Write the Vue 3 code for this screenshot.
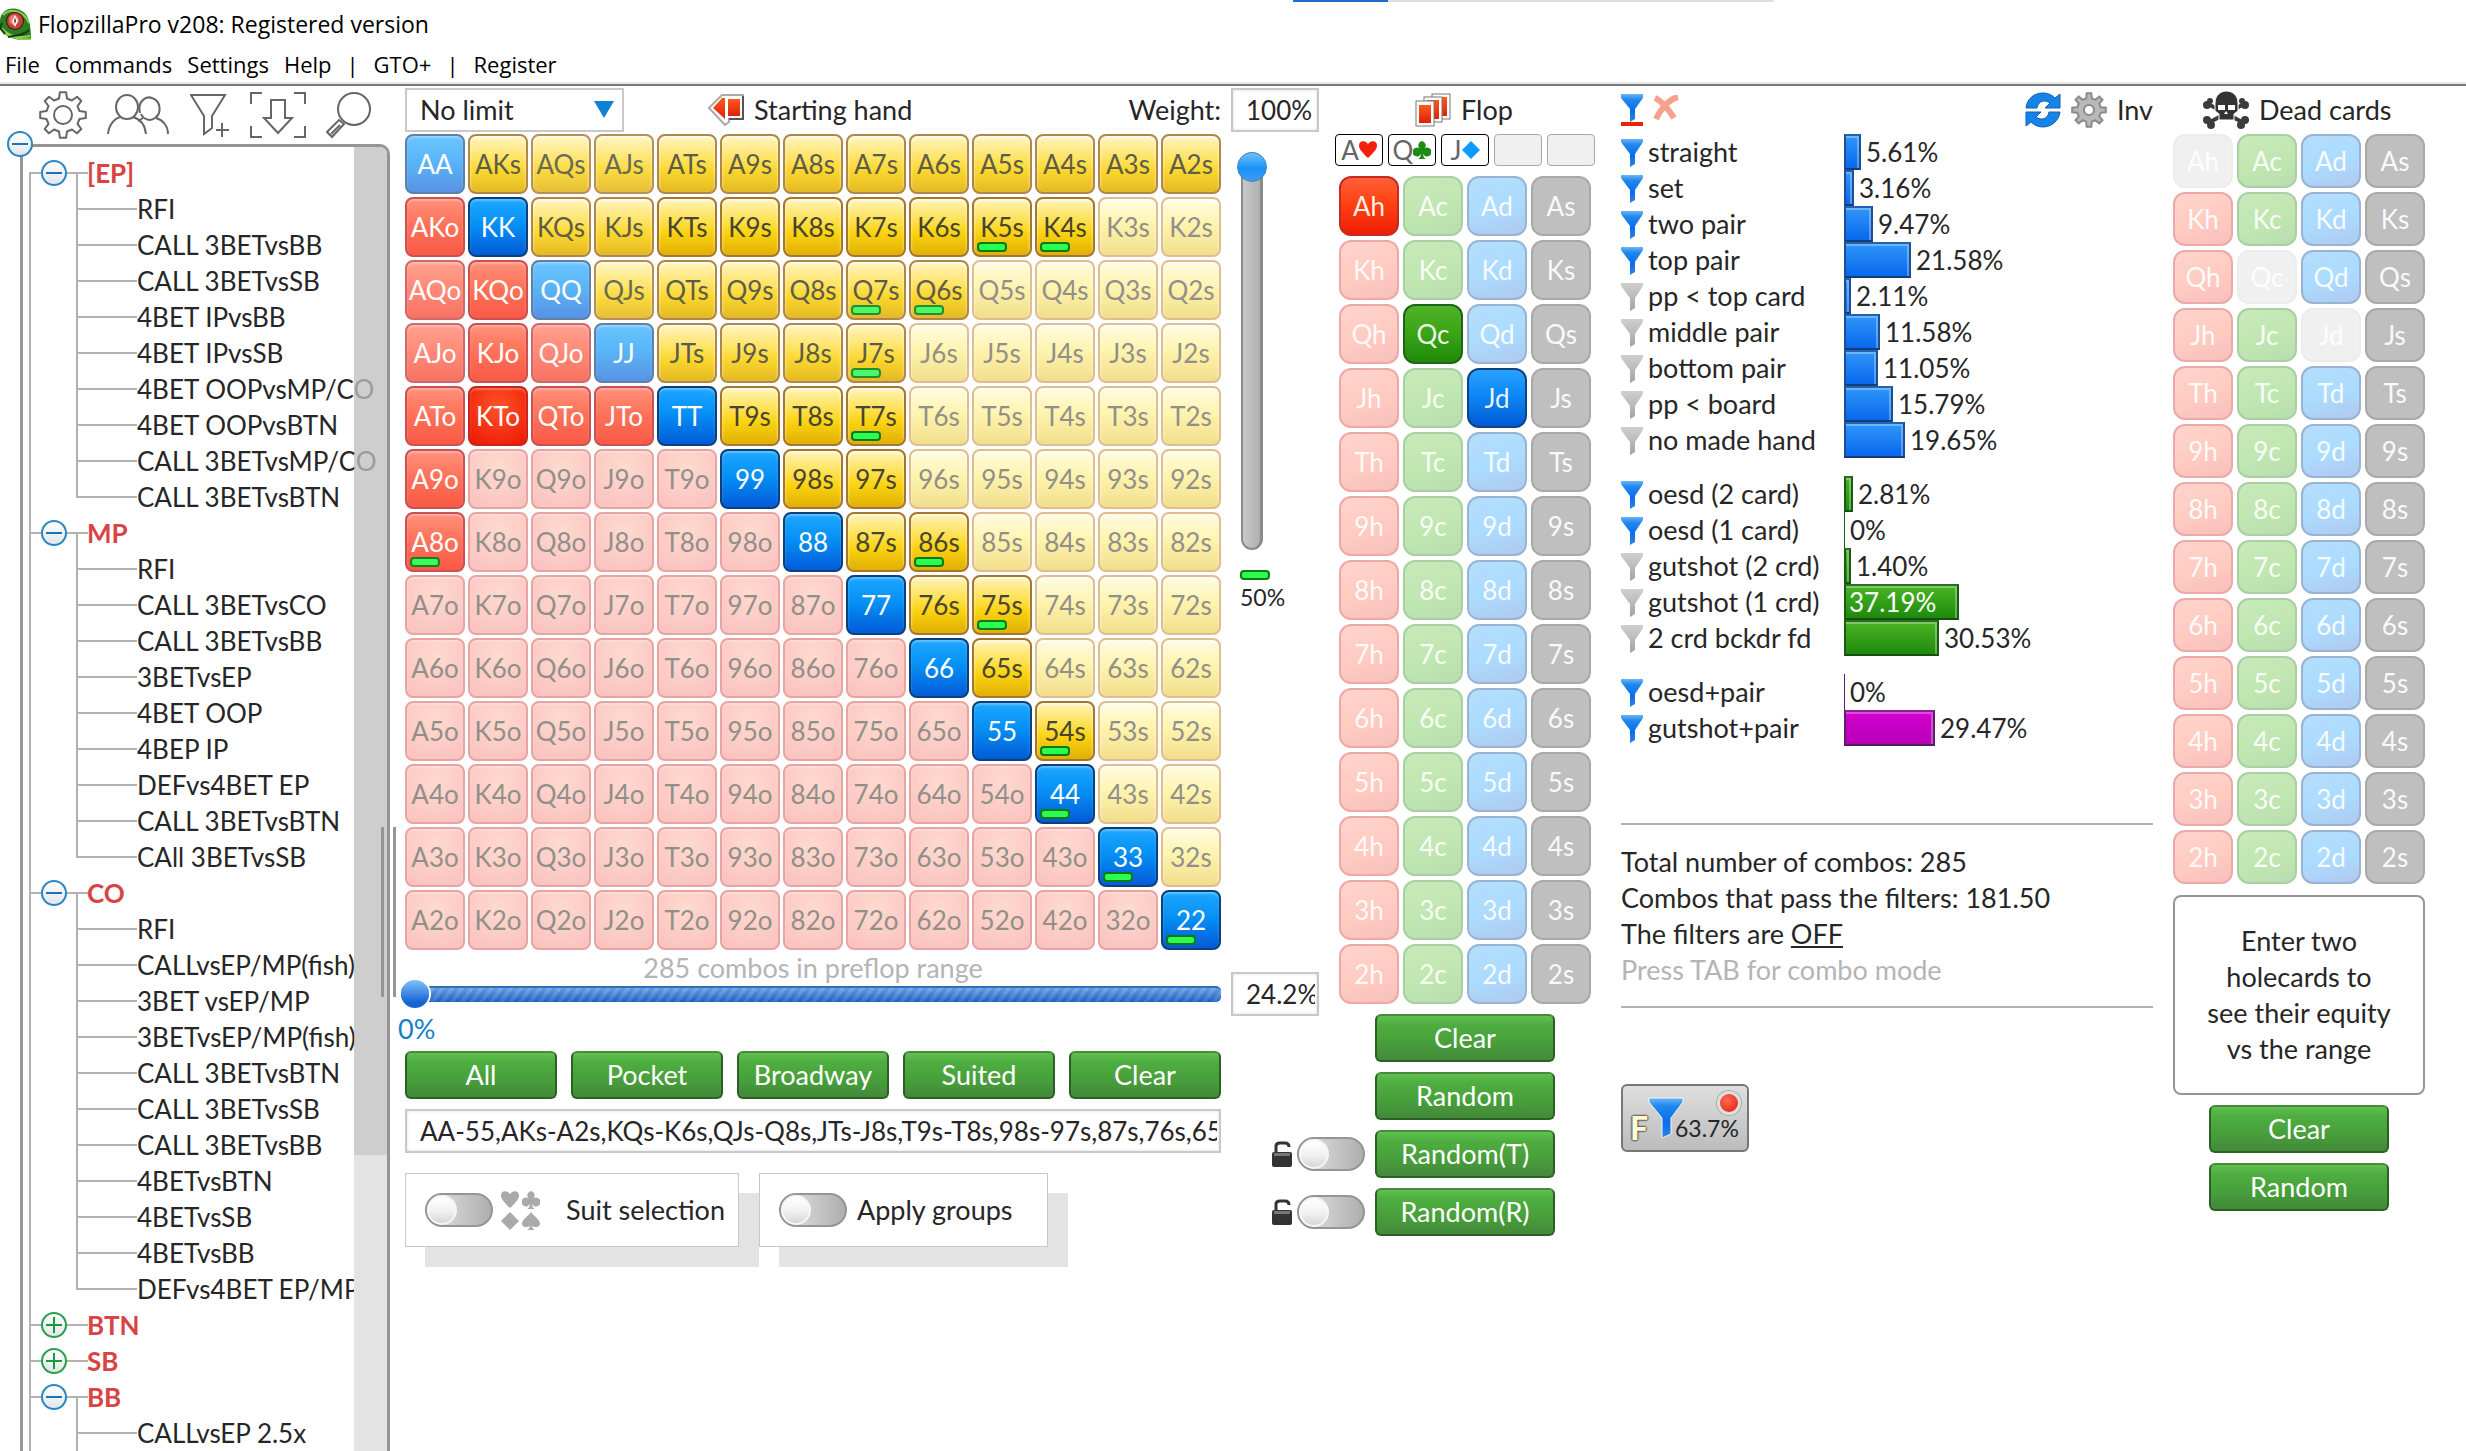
<script setup>
import { ref } from 'vue'

const ranks = 'AKQJT98765432'.split('')
const suits = ['h', 'c', 'd', 's']

const menuItems = ['File', 'Commands', 'Settings', 'Help', '|', 'GTO+', '|', 'Register']

const treeGroups = [
  {
    name: '[EP]',
    open: true,
    items: [
      'RFI',
      'CALL 3BETvsBB',
      'CALL 3BETvsSB',
      '4BET IPvsBB',
      '4BET IPvsSB',
      '4BET OOPvsMP/CO',
      '4BET OOPvsBTN',
      'CALL 3BETvsMP/CO',
      'CALL 3BETvsBTN'
    ]
  },
  {
    name: 'MP',
    open: true,
    items: [
      'RFI',
      'CALL 3BETvsCO',
      'CALL 3BETvsBB',
      '3BETvsEP',
      '4BET OOP',
      '4BEP IP',
      'DEFvs4BET EP',
      'CALL 3BETvsBTN',
      'CAll 3BETvsSB'
    ]
  },
  {
    name: 'CO',
    open: true,
    items: [
      'RFI',
      'CALLvsEP/MP(fish)',
      '3BET vsEP/MP',
      '3BETvsEP/MP(fish)',
      'CALL 3BETvsBTN',
      'CALL 3BETvsSB',
      'CALL 3BETvsBB',
      '4BETvsBTN',
      '4BETvsSB',
      '4BETvsBB',
      'DEFvs4BET EP/MP'
    ]
  },
  { name: 'BTN', open: false, items: [] },
  { name: 'SB', open: false, items: [] },
  { name: 'BB', open: true, more: true, items: ['CALLvsEP 2.5x'] }
]

// lowest suited kicker that is in the range, per high card
const suitedFloor = { A: '2', K: '4', Q: '6', J: '7', T: '7', 9: '7', 8: '6', 7: '5', 6: '5', 5: '4' }
const offsuit = ['AKo', 'AQo', 'KQo', 'AJo', 'KJo', 'QJo', 'ATo', 'KTo', 'QTo', 'JTo', 'A9o', 'A8o']
const halfWeight = ['K5s', 'K4s', 'Q7s', 'Q6s', 'J7s', 'T7s', 'A8o', '86s', '75s', '54s', '44', '33', '22']
const board = ['Ah', 'Qc', 'Jd']

function buildCell(row, col) {
  const high = ranks[Math.min(row, col)]
  const low = ranks[Math.max(row, col)]
  const type = row === col ? 'pair' : col > row ? 'suited' : 'off'
  const name = high + low + { pair: '', suited: 's', off: 'o' }[type]
  let active = type === 'pair'
  if (type === 'suited') {
    active = high in suitedFloor && ranks.indexOf(low) <= ranks.indexOf(suitedFloor[high])
  } else if (type === 'off') {
    active = offsuit.includes(name)
  }
  const blockers = board.filter((card) => card[0] === high).length + board.filter((card) => card[0] === low).length
  return { name, type, active, blockers: active ? blockers : 0, half: halfWeight.includes(name) }
}

const cells = ranks.flatMap((_, row) => ranks.map((_, col) => buildCell(row, col)))
const deck = ranks.flatMap((rank) => suits.map((suit) => ({ name: rank + suit, suit })))

const slots = [
  { rank: 'A', suit: 'h' },
  { rank: 'Q', suit: 'c' },
  { rank: 'J', suit: 'd' },
  {},
  {}
]

const suitPaths = {
  h: 'M10 19 C3 12 0 9 0 5 C0 -1 8 -1 10 4 C12 -1 20 -1 20 5 C20 9 17 12 10 19 Z',
  c: 'M10 0 A5 5 0 0 1 13 8 A5 5 0 1 1 11 14 L12 18 L14 20 H6 L8 18 L9 14 A5 5 0 1 1 7 8 A5 5 0 0 1 10 0 Z',
  d: 'M10 0 L20 10 L10 20 L0 10 Z',
  s: 'M10 0 C12 4 20 8 20 13 C20 17 14 18 11 15 L12 18 L14 20 H6 L8 18 L9 15 C6 18 0 17 0 13 C0 8 8 4 10 0 Z'
}

const statGroups = [
  {
    color: 'blue',
    rows: [
      { label: 'straight', value: 5.61, text: '5.61%', on: true },
      { label: 'set', value: 3.16, text: '3.16%', on: true },
      { label: 'two pair', value: 9.47, text: '9.47%', on: true },
      { label: 'top pair', value: 21.58, text: '21.58%', on: true },
      { label: 'pp < top card', value: 2.11, text: '2.11%' },
      { label: 'middle pair', value: 11.58, text: '11.58%' },
      { label: 'bottom pair', value: 11.05, text: '11.05%' },
      { label: 'pp < board', value: 15.79, text: '15.79%' },
      { label: 'no made hand', value: 19.65, text: '19.65%' }
    ]
  },
  {
    color: 'green',
    rows: [
      { label: 'oesd (2 card)', value: 2.81, text: '2.81%', on: true },
      { label: 'oesd (1 card)', value: 0, text: '0%', on: true },
      { label: 'gutshot (2 crd)', value: 1.4, text: '1.40%' },
      { label: 'gutshot (1 crd)', value: 37.19, text: '37.19%', inside: true },
      { label: '2 crd bckdr fd', value: 30.53, text: '30.53%' }
    ]
  },
  {
    color: 'purple',
    rows: [
      { label: 'oesd+pair', value: 0, text: '0%', on: true },
      { label: 'gutshot+pair', value: 29.47, text: '29.47%', on: true }
    ]
  }
]

const gameType = ref('No limit')
const weight = ref(100)
const percentage = ref(0)
const weightText = ref('100%')
const rangePercent = ref('24.2%')
const rangeText = ref('AA-55,AKs-A2s,KQs-K6s,QJs-Q8s,JTs-J8s,T9s-T8s,98s-97s,87s,76s,65s,AKo-A9o,KQo-KTo')

const barWidth = (value) => Math.max(1, Math.round(value * 3.1)) + 'px'

function gearPath(center, outer, inner, teeth) {
  const points = []
  const step = (Math.PI * 2) / teeth
  for (let i = 0; i < teeth; i++) {
    const angle = i * step - Math.PI / 2
    const corners = [
      [inner, -0.3],
      [outer, -0.17],
      [outer, 0.17],
      [inner, 0.3]
    ]
    corners.forEach(([radius, offset]) => {
      const a = angle + offset * step
      points.push(`${(center + radius * Math.cos(a)).toFixed(1)} ${(center + radius * Math.sin(a)).toFixed(1)}`)
    })
  }
  return `M${points.join(' L')} Z`
}
</script>

<template>
  <div class="app">
    <svg class="defs" width="0" height="0" aria-hidden="true">
      <defs>
        <linearGradient id="funnel-blue" x1="0" y1="0" x2="0" y2="1">
          <stop offset="0" stop-color="#6db4f5" />
          <stop offset="0.2" stop-color="#2287ee" />
          <stop offset="0.6" stop-color="#0a6cf0" />
          <stop offset="1" stop-color="#2f86dd" />
        </linearGradient>
        <linearGradient id="funnel-gray" x1="0" y1="0" x2="0" y2="1">
          <stop offset="0" stop-color="#d0d0d0" />
          <stop offset="1" stop-color="#a2a2a2" />
        </linearGradient>
        <linearGradient id="card-red" x1="0" y1="0" x2="0" y2="1">
          <stop offset="0" stop-color="#ff5a1c" />
          <stop offset="1" stop-color="#e02008" />
        </linearGradient>
      </defs>
    </svg>

    <div class="load-bar"><span class="done"></span><span class="left"></span></div>
    <header class="titlebar">
      <svg class="logo" viewBox="0 0 32 32" aria-hidden="true">
        <path d="M0 12 C1 2 11 -2 20 2 C28 5 31 14 31 31 C24 33 14 32 7 28 C2 24 -1 19 0 12 Z" fill="#2c7d22" />
        <path d="M2 20 C8 29 20 30 30 28 M3 7 C11 -1 24 3 29 15 M5 25 C13 31 24 32 31 31" fill="none" stroke="#8fce52" stroke-width="2" />
        <path d="M8 29 C16 27 24 28 29 22 M2 15 L0 20 L5 26" fill="none" stroke="#12400f" stroke-width="2" />
        <circle cx="15" cy="13" r="9" fill="#301512" />
        <circle cx="15" cy="13" r="8" fill="#c3433a" />
        <circle cx="14" cy="12" r="5" fill="#e07a6c" />
        <path d="M15 7 L18 13 L15 19 L12 13 Z" fill="#fff" />
        <path d="M15 9 L16 13 L15 16 L14 13 Z" fill="#a21610" />
      </svg>
      <span>FlopzillaPro v208: Registered version</span>
    </header>
    <nav class="menubar">
      <template v-for="(item, index) in menuItems" :key="index">
        <span v-if="item === '|'">|</span>
        <a v-else href="#">{{ item }}</a>
      </template>
    </nav>

    <main class="workspace">
      <aside class="sidebar" aria-label="Ranges">
        <div class="tools">
          <button type="button" aria-label="Settings">
            <svg width="48" height="48" viewBox="0 0 48 48" fill="none" stroke="#666" stroke-width="2" stroke-linejoin="round">
              <path :d="gearPath(24, 23, 17, 8)" />
              <circle cx="24" cy="24" r="9" />
            </svg>
          </button>
          <button type="button" aria-label="Players">
            <svg width="62" height="48" viewBox="0 0 62 48" fill="none" stroke="#666" stroke-width="2">
              <ellipse cx="20" cy="16" rx="11" ry="12" />
              <path d="M1 43 C2 33 8 27 14 26 M26 26 C33 28 38 34 39 43" />
              <path d="M33 22 C30 9 40 5 45 7 C54 10 55 22 48 27 C43 31 36 28 34 23" />
              <path d="M49 27 C56 29 61 35 61 43 M31 30 L36 27" />
            </svg>
          </button>
          <button type="button" aria-label="Add filter">
            <svg width="40" height="48" viewBox="0 0 40 48" fill="none" stroke="#666" stroke-width="2">
              <path d="M1 4 H35 L22 25 V37 L14 43 V25 Z" />
              <path d="M26 39 H39 M32 32 V46" />
            </svg>
          </button>
          <button type="button" aria-label="Save range">
            <svg width="56" height="48" viewBox="0 0 56 48" fill="none" stroke="#666" stroke-width="2">
              <path d="M12 2 H1 V13 M44 2 H55 V13 M1 35 V46 H12 M55 35 V46 H44" />
              <path d="M21 9 H35 V27 H42 L28 42 L14 27 H21 Z" />
            </svg>
          </button>
          <button type="button" aria-label="Search">
            <svg width="46" height="48" viewBox="0 0 46 48" fill="none" stroke="#666" stroke-width="2">
              <circle cx="28" cy="18" r="16" />
              <path d="M13 29 L18 33 L6 46 L1 41 Z M14 34 L5 43" />
            </svg>
          </button>
        </div>

        <div class="tree">
          <button class="node-toggle root-toggle minus" type="button" aria-label="Collapse all"></button>
          <ul class="groups">
            <li v-for="group in treeGroups" :key="group.name">
              <div class="group-row">
                <button
                  class="node-toggle"
                  :class="group.open ? 'minus' : 'plus'"
                  type="button"
                  :aria-label="'Toggle ' + group.name"
                ></button>
                <span class="group-name">{{ group.name }}</span>
              </div>
              <ul v-if="group.open" class="items" :class="{ more: group.more }">
                <li v-for="item in group.items" :key="item">{{ item }}</li>
              </ul>
            </li>
          </ul>
          <div class="scrollbar"><span class="thumb"></span><span class="rest"></span></div>
          <div class="splitter"></div>
        </div>
      </aside>

      <section class="range">
        <div class="range-head">
          <div class="select-box">
            <select v-model="gameType" aria-label="Game type">
              <option>No limit</option>
            </select>
          </div>
          <h2>
            <svg width="36" height="32" viewBox="0 0 36 32" aria-hidden="true">
              <path d="M16 1 H35 V25 H21 V28 L17 31 L1 14 L14 1 Z" fill="#fff" stroke="#aaa" stroke-width="2" />
              <path d="M35 2 V25 H21" fill="none" stroke="#555" stroke-width="2" />
              <path d="M14 4 L17 4 V25 L5 14 Z" fill="url(#card-red)" />
              <rect x="20" y="5" width="12" height="17" fill="url(#card-red)" />
            </svg>
            Starting hand
          </h2>
          <label for="weight-text">Weight:</label>
        </div>

        <div class="matrix">
          <button
            v-for="cell in cells"
            :key="cell.name"
            class="cell"
            :class="[cell.type, { active: cell.active, half: cell.half }, 'blocked-' + cell.blockers]"
            type="button"
          >
            {{ cell.name }}
          </button>
        </div>

        <p class="combos">285 combos in preflop range</p>
        <input v-model="percentage" class="range-slider" type="range" min="0" max="100" aria-label="Top percentage" />
        <p class="zero">0%</p>

        <div class="range-buttons">
          <button v-for="name in ['All', 'Pocket', 'Broadway', 'Suited', 'Clear']" :key="name" class="green-button" type="button">
            {{ name }}
          </button>
        </div>
        <input v-model="rangeText" class="text-box range-text" type="text" aria-label="Range" />

        <div class="options">
          <label class="option suit-option">
            <input class="switch" type="checkbox" />
            <span class="suit-icons">
              <svg v-for="suit in ['h', 'c', 'd', 's']" :key="suit" width="18" height="18" viewBox="0 0 20 20" fill="#aaa">
                <path :d="suitPaths[suit]" />
              </svg>
            </span>
            Suit selection
          </label>
          <label class="option">
            <input class="switch" type="checkbox" />
            Apply groups
          </label>
        </div>
      </section>

      <section class="weight">
        <input id="weight-text" v-model="weightText" class="text-box small" type="text" />
        <input v-model="weight" class="weight-slider" type="range" min="0" max="100" aria-label="Weight" />
        <div class="half-mark">
          <span class="pill"></span>
          50%
        </div>
        <input v-model="rangePercent" class="text-box small" type="text" aria-label="Range percentage" />
      </section>

      <section class="flop">
        <h2>
          <svg width="36" height="34" viewBox="0 0 36 34" aria-hidden="true">
            <g stroke-width="1">
              <rect x="17" y="1" width="18" height="25" fill="#fff" stroke="#777" />
              <rect x="20" y="4" width="12" height="19" fill="url(#card-red)" stroke="none" />
              <rect x="9" y="4" width="18" height="25" fill="#fff" stroke="#777" />
              <rect x="12" y="7" width="12" height="19" fill="url(#card-red)" stroke="none" />
              <rect x="1" y="8" width="18" height="25" fill="#fff" stroke="#777" />
              <rect x="4" y="12" width="12" height="18" fill="url(#card-red)" stroke="none" />
            </g>
          </svg>
          Flop
        </h2>
        <div class="slots">
          <span v-for="(slot, index) in slots" :key="index" class="slot" :class="{ empty: !slot.rank }">
            <template v-if="slot.rank">
              {{ slot.rank }}
              <svg width="18" height="18" viewBox="0 0 20 20" :class="'fill-' + slot.suit">
                <path :d="suitPaths[slot.suit]" />
              </svg>
            </template>
          </span>
        </div>
        <div class="deck">
          <button
            v-for="card in deck"
            :key="card.name"
            class="card"
            :class="[card.suit, { chosen: board.includes(card.name) }]"
            type="button"
          >
            {{ card.name }}
          </button>
        </div>
        <div class="deck-actions">
          <button class="green-button" type="button">Clear</button>
          <button class="green-button" type="button">Random</button>
          <div v-for="name in ['Random(T)', 'Random(R)']" :key="name" class="locked">
            <svg width="20" height="26" viewBox="0 0 20 26" aria-hidden="true">
              <path d="M4 11 V5 Q4 2 8 2 H13 Q17 2 17 6" fill="none" stroke="#333" stroke-width="3" />
              <rect x="0" y="11" width="20" height="15" rx="2" fill="#333" />
              <rect x="2" y="12" width="16" height="3" fill="#777" />
            </svg>
            <input class="switch" type="checkbox" :aria-label="'Lock ' + name" />
            <button class="green-button" type="button">{{ name }}</button>
          </div>
        </div>
      </section>

      <section class="stats">
        <div class="stats-head">
          <button type="button" aria-label="Filters">
            <svg width="22" height="32" viewBox="0 0 22 32">
              <path d="M0 0 H22 V4 L14 15 V25 L9 28 V15 L0 4 Z" fill="url(#funnel-blue)" />
              <rect y="28" width="22" height="4" fill="#f01e0c" />
            </svg>
          </button>
          <button class="cross" type="button" aria-label="Remove filters">
            <svg width="26" height="26" viewBox="0 0 26 26" fill="none" stroke="#f7a08c" stroke-width="6">
              <path d="M2 3 C9 6 16 15 21 23 M25 2 C16 4 7 15 3 24" />
            </svg>
          </button>
          <button class="refresh" type="button" aria-label="Refresh">
            <svg width="36" height="36" viewBox="0 0 36 36" fill="#1683e8" stroke="#1260b4" stroke-width="1">
              <path d="M1 16 C2 6 10 1 18 1 C24 1 28 4 30 6 L35 2 V16 H20 L25 11 C20 7 13 9 12 16 Z" />
              <path d="M35 20 C34 29 26 35 18 35 C12 35 8 32 6 30 L1 34 V20 H16 L11 25 C16 29 23 27 24 20 Z" />
            </svg>
          </button>
          <button type="button" aria-label="Options">
            <svg width="36" height="36" viewBox="0 0 36 36" fill="#b9b9b9" stroke="#8a8a8a" stroke-width="2">
              <path :d="gearPath(18, 17, 12, 8)" />
              <circle cx="18" cy="18" r="5" fill="#fff" />
            </svg>
          </button>
          <span>Inv</span>
        </div>

        <table>
          <tbody v-for="group in statGroups" :key="group.color">
            <tr v-for="row in group.rows" :key="row.label">
              <td class="filter-cell">
                <button type="button" :aria-label="'Filter ' + row.label">
                  <svg width="22" height="28" viewBox="0 0 22 28">
                    <path d="M0 0 H22 V3 L14 15 V25 L9 28 V15 L0 3 Z" :fill="row.on ? 'url(#funnel-blue)' : 'url(#funnel-gray)'" />
                  </svg>
                </button>
              </td>
              <th scope="row">{{ row.label }}</th>
              <td>
                <div class="bar-line">
                  <span class="bar" :class="[group.color, { none: !row.value }]" :style="{ width: barWidth(row.value) }">
                    <template v-if="row.inside">{{ row.text }}</template>
                  </span>
                  <span v-if="!row.inside">{{ row.text }}</span>
                </div>
              </td>
            </tr>
          </tbody>
        </table>

        <div class="summary">
          <p>Total number of combos: 285</p>
          <p>Combos that pass the filters: 181.50</p>
          <p>The filters are <a href="#">OFF</a></p>
          <p class="hint">Press TAB for combo mode</p>
        </div>

        <button class="filter-button" type="button">
          <b>F</b>
          <svg width="36" height="44" viewBox="0 0 36 44" aria-hidden="true">
            <path d="M1 2 H35 V6 L23 22 V38 L14 42 V22 L1 6 Z" fill="url(#funnel-blue)" stroke="#f4f4f4" stroke-width="1" />
          </svg>
          <span>63.7%</span>
          <i></i>
        </button>
      </section>

      <section class="dead">
        <h2>
          <svg width="46" height="38" viewBox="0 0 46 38" aria-hidden="true">
            <path d="M5 13 L41 32 M41 13 L5 32" stroke="#3c3c3c" stroke-width="4" />
            <g fill="#3c3c3c">
              <circle cx="4" cy="14" r="4" />
              <circle cx="7" cy="10" r="3" />
              <circle cx="42" cy="14" r="4" />
              <circle cx="39" cy="10" r="3" />
              <circle cx="4" cy="29" r="4" />
              <circle cx="8" cy="34" r="4" />
              <circle cx="42" cy="29" r="4" />
              <circle cx="38" cy="34" r="4" />
            </g>
            <path d="M12 12 C12 -4 35 -4 35 12 V20 L31 23 V29 H16 V23 L12 20 Z" fill="#333" stroke="#fff" stroke-width="1" />
            <path d="M15 14 H22 V19 H15 Z M25 14 H32 V19 H25 Z M23 20 L25 23 H21 Z" fill="#fff" />
          </svg>
          Dead cards
        </h2>
        <div class="deck">
          <button
            v-for="card in deck"
            :key="card.name"
            class="card"
            :class="board.includes(card.name) ? 'gone' : card.suit"
            type="button"
          >
            {{ card.name }}
          </button>
        </div>
        <p class="note">Enter two<br />holecards to<br />see their equity<br />vs the range</p>
        <div class="deck-actions">
          <button class="green-button" type="button">Clear</button>
          <button class="green-button" type="button">Random</button>
        </div>
      </section>
    </main>
  </div>
</template>

<style>
body {
  margin: 0;
  background: #fff;
}
</style>

<style scoped>
.app {
  display: flex;
  flex-direction: column;
  min-height: 100vh;
  overflow: hidden;
  color: #262626;
  font-family: Lato, 'Liberation Sans', sans-serif;
  font-size: 27px;
  line-height: 36px;
}

.app *,
.app *::before,
.app *::after {
  box-sizing: border-box;
}

.defs {
  position: absolute;
}

button,
input,
select {
  margin: 0;
  padding: 0;
  color: inherit;
  font: inherit;
}

button {
  border: 0;
  background: none;
  cursor: pointer;
}

svg {
  display: block;
  flex: none;
}

h2,
p,
ul {
  margin: 0;
  padding: 0;
  font-size: inherit;
  font-weight: 400;
  list-style: none;
}

a {
  color: inherit;
}

/* window chrome */
.load-bar {
  display: grid;
  grid-template-columns: 1293fr 95fr 386fr 692fr;
  height: 2px;
}

.load-bar .done {
  grid-column: 2;
  background: #1a6fd0;
}

.load-bar .left {
  background: #dcdfe4;
}

.titlebar,
.menubar {
  display: flex;
  align-items: center;
  color: #000;
  font-family: 'Open Sans', 'Noto Sans', sans-serif;
  font-size: 22px;
}

.titlebar {
  height: 44px;
  gap: 6px;
  font-size: 23px;
}

.logo {
  width: 32px;
  height: 32px;
}

.menubar {
  height: 40px;
  gap: 15px;
  padding: 0 5px 2px;
  border-bottom: 2px solid #777;
  box-shadow: inset 0 -2px #e8e8e8;
}

.menubar a {
  text-decoration: none;
}

.workspace {
  flex: 1;
  display: grid;
  grid-template-columns:
    minmax(0, 405fr) minmax(0, 816fr) minmax(0, 114fr) minmax(0, 286fr)
    minmax(0, 552fr) minmax(0, 293fr);
}

/* range tree */
.sidebar {
  display: flex;
  flex-direction: column;
  padding: 0 15px 0 20px;
}

.tools {
  display: flex;
  justify-content: space-between;
  align-items: center;
  height: 58px;
  padding: 0 18px 0 19px;
}

.tree {
  position: relative;
  flex: 1;
  padding: 8px 0 0 6px;
  border: 3px solid #959595;
  border-bottom: 0;
  border-radius: 0 10px 0 0;
  font-size: 26px;
  white-space: nowrap;
}

.groups {
  height: 100%;
  background: linear-gradient(#b2b2b2, #b2b2b2) 0 18px / 2px 100% no-repeat;
}

.group-row {
  display: flex;
  align-items: center;
  height: 36px;
  padding-left: 12px;
  background: linear-gradient(#b2b2b2, #b2b2b2) 0 center / 59px 2px no-repeat;
}

.node-toggle {
  position: relative;
  width: 26px;
  height: 26px;
  border: 2px solid #2a87c4;
  border-radius: 50%;
  background: linear-gradient(#fff, #e3e6e9);
}

.node-toggle::before,
.node-toggle.plus::after {
  content: '';
  position: absolute;
  inset: 10px 3px;
  background: #1577bd;
}

.node-toggle.plus {
  border-color: #2a9e4d;
}

.node-toggle.plus::before {
  background: #179c3b;
}

.node-toggle.plus::after {
  inset: 3px 10px;
  background: #179c3b;
}

.root-toggle {
  position: absolute;
  left: -16px;
  top: -16px;
}

.group-name {
  margin-left: 20px;
  color: #d94343;
  font-weight: 700;
}

.items {
  position: relative;
}

.items::before {
  content: '';
  position: absolute;
  left: 47px;
  top: -18px;
  width: 2px;
  height: 18px;
  background: #b2b2b2;
}

.items li {
  height: 36px;
  padding-left: 108px;
  background:
    linear-gradient(#b2b2b2, #b2b2b2) 47px center / 61px 2px no-repeat,
    linear-gradient(#b2b2b2, #b2b2b2) 47px 0 / 2px 100% no-repeat;
}

.items li:last-child {
  background-size: 61px 2px, 2px 50%;
}

.items.more li:last-child {
  background-size: 61px 2px, 2px 100%;
}

.scrollbar {
  position: absolute;
  inset: 0 0 0 auto;
  display: grid;
  grid-template-rows: 1008fr 296fr;
  width: 33px;
  border-radius: 0 7px 0 0;
  overflow: hidden;
}

.thumb {
  background: rgba(191, 191, 191, 0.77);
}

.rest {
  background: #e3e3e3;
}

.splitter {
  position: absolute;
  top: 680px;
  right: -9px;
  width: 15px;
  height: 170px;
  border: solid #959595;
  border-width: 0 3px;
}

/* preflop range */
.range {
  display: flex;
  flex-direction: column;
}

.range-head {
  display: flex;
  align-items: center;
  gap: 84px;
  height: 48px;
}

.range-head label {
  margin-left: auto;
}

.select-box {
  position: relative;
  width: 219px;
}

.select-box select {
  width: 100%;
  height: 44px;
  padding-left: 13px;
  border: 2px solid #c8c8c8;
  border-radius: 0;
  background: #fff;
  appearance: none;
}

.select-box::after {
  content: '';
  position: absolute;
  top: 13px;
  right: 10px;
  border: solid transparent;
  border-width: 17px 10px 0;
  border-top-color: #0f80d2;
}

h2 {
  display: flex;
  align-items: center;
  gap: 10px;
  height: 48px;
}

.matrix {
  display: grid;
  grid-template-columns: repeat(13, minmax(0, 1fr));
  gap: 3px;
}

.cell {
  position: relative;
  height: 60px;
  border: 2px solid;
  border-radius: 8px;
  color: #928f8a;
  font-size: 26px;
}

.cell.suited {
  border-color: #e0bd8f;
  background: linear-gradient(#fffbe2, #fef4ae 45%, #f1de8c);
  box-shadow: inset 0 2px 3px rgba(255, 255, 255, 0.7);
}

.cell.off {
  border-color: #e8a3a3;
  background: radial-gradient(circle at 50% 30%, #ffdacf, #fac3bf 90%);
  box-shadow: inset 0 2px 2px rgba(255, 255, 255, 0.3);
}

.cell.suited.active {
  border-color: #a67530;
  background: linear-gradient(#fff3b8, #fee152 38%, #fad20e 62%, #e0af06);
  color: #47442f;
}

.cell.off.active {
  border-color: #c8231f;
  background: radial-gradient(circle at 50% 35%, #ff5426, #ee1c07 90%);
  color: #fff;
}

.cell.pair {
  border-color: #0d3f7a;
  background: linear-gradient(#1ea7ff, #0590f5 45%, #035bd8);
  color: #fff;
  box-shadow: inset 0 2px 2px rgba(255, 255, 255, 0.3);
}

.cell.blocked-1 {
  opacity: 0.87;
}

.cell.blocked-2 {
  opacity: 0.8;
}

/* one or two board cards shared with an offsuit hand */
.cell.off.blocked-1 {
  border-color: #c9454a;
  background: linear-gradient(#ff8a72, #ff6a50 45%, #f8503a);
  opacity: 0.94;
}

.cell.off.blocked-2 {
  border-color: #cf6063;
  background: linear-gradient(#ff9c88, #ff8470 45%, #f76a5a);
  opacity: 0.94;
}

.cell.pair.blocked-2 {
  opacity: 0.66;
}

.half::after,
.pill {
  width: 30px;
  height: 10px;
  border: 2px solid #087a16;
  border-radius: 4px;
  background: #2dfb50;
}

.half::after {
  content: '';
  position: absolute;
  left: 3px;
  bottom: 3px;
}

.combos {
  height: 30px;
  color: #b4b4b4;
  text-align: center;
}

.range-slider {
  width: calc(100% + 4px);
  height: 28px;
  margin-left: -4px;
  background: none;
  appearance: none;
}

.range-slider::-webkit-slider-runnable-track {
  height: 16px;
  border-top: 2px solid #2f6fb5;
  border-radius: 5px;
  background:
    linear-gradient(rgba(255, 255, 255, 0.3), rgba(0, 30, 120, 0.2)),
    repeating-linear-gradient(125deg, #3f87e0 0 4px, #2a6dd2 4px 8px);
}

.range-slider::-webkit-slider-thumb {
  width: 28px;
  height: 28px;
  margin-top: -8px;
  border: 0;
  border-radius: 50%;
  background: linear-gradient(#7fc3fb, #1564d2 80%);
  box-shadow: 0 0 0 2px #fff;
  appearance: none;
}

.zero {
  height: 43px;
  margin-left: -7px;
  padding-top: 3px;
  color: #0f80c8;
}

.range-buttons {
  display: grid;
  grid-template-columns: repeat(5, minmax(0, 1fr));
  gap: 14px;
}

.green-button {
  height: 48px;
  border: 2px solid #2b6122;
  border-top-color: #4a8a3e;
  border-radius: 6px;
  background: linear-gradient(#5fc04f, #4eae40 20%, #489f3b 60%, #43893a);
  color: #fff;
}

.text-box {
  height: 44px;
  padding: 0 2px 0 13px;
  border: 2px solid #c8c8c8;
  background: #fff;
  box-shadow: inset 0 0 3px rgba(0, 0, 0, 0.15);
  font-size: 26px;
}

.range-text {
  margin: 10px 0 20px;
}

.options {
  display: grid;
  grid-template-columns: 334px 289px;
  gap: 20px;
}

.option {
  display: flex;
  align-items: center;
  height: 74px;
  gap: 10px;
  padding-left: 19px;
  border: 1px solid #c8c8c8;
  background: #fff;
  box-shadow: 20px 20px 0 #e3e3e3;
  white-space: nowrap;
}

.suit-option {
  gap: 8px;
}

.suit-icons {
  display: grid;
  grid-template-columns: 18px 18px;
  gap: 3px;
  margin-right: 18px;
}

.switch {
  flex: none;
  width: 68px;
  height: 34px;
  border: 2px solid #959595;
  border-radius: 17px;
  background: linear-gradient(90deg, #d5d5d5 30%, #aeaeae);
  appearance: none;
}

.switch::before {
  content: '';
  display: block;
  width: 30px;
  height: 30px;
  border: 2px solid #f6f6f6;
  border-radius: 50%;
  background: linear-gradient(#fff, #f1f1f1 55%, #d6d6d6);
}

/* weight */
.weight {
  display: flex;
  flex-direction: column;
  align-items: flex-start;
  padding: 2px 0 0 10px;
}

.small {
  width: 88px;
}

.weight-slider {
  width: 30px;
  height: 398px;
  margin: 20px 0 20px 6px;
  background: none;
  appearance: none;
  direction: rtl;
  writing-mode: vertical-lr;
}

.weight-slider::-webkit-slider-runnable-track {
  width: 22px;
  border: solid #8a8a8a;
  border-width: 0 3px 2px 2px;
  border-radius: 11px;
  background: linear-gradient(90deg, #c9c9c9, #b0b0b0);
}

.weight-slider::-webkit-slider-thumb {
  width: 30px;
  height: 30px;
  margin-left: -6px;
  border: 1px solid #3d85c8;
  border-radius: 50%;
  background: linear-gradient(#6fc0fb, #1593f8 55%, #459af0);
  appearance: none;
}

.half-mark {
  display: flex;
  flex-direction: column;
  height: 402px;
  margin-left: 9px;
  font-size: 23px;
  line-height: 34px;
}

/* cards */
.flop h2 {
  padding-left: 80px;
}

.slots {
  display: flex;
  gap: 5px;
  margin-bottom: 10px;
}

.slot {
  display: flex;
  align-items: center;
  justify-content: center;
  width: 48px;
  height: 32px;
  border: 1px solid #000;
  border-radius: 4px;
  color: #666;
  font-size: 26px;
}

.slot.empty {
  border-color: #a8a8a8;
  background: #efefef;
}

.fill-h {
  fill: #f5200c;
}

.fill-c {
  fill: #1d8a12;
}

.fill-d {
  fill: #0d9bff;
}

.deck {
  display: grid;
  grid-template-columns: repeat(4, 60px);
  gap: 4px;
}

.flop .deck {
  padding-left: 4px;
}

.card {
  height: 60px;
  border: 2px solid;
  border-radius: 12px;
  color: rgba(255, 255, 255, 0.92);
  font-size: 26px;
}

.dead .card {
  height: 54px;
}

.card.h {
  border-color: #eba9a9;
  background: linear-gradient(160deg, #ffd3cb, #ffccc2 50%, #f8bfbb);
}

.card.c {
  border-color: #a9cfa3;
  background: linear-gradient(160deg, #c8eab9, #bfe6b0 60%, #b8ddb0);
}

.card.d {
  border-color: #98b4d2;
  background: linear-gradient(165deg, #b5ddfc, #abdcff 50%, #b0c9f0);
}

.card.s {
  border-color: #a9a9a9;
  background: #bfbfbf;
}

.card.h.chosen {
  border-color: #c52b22;
  background: linear-gradient(#ff6039, #ff4312 45%, #ee1d05);
}

.card.c.chosen {
  border-color: #1d6617;
  background: linear-gradient(#50b227, #3ba316 50%, #208a0a);
}

.card.d.chosen {
  border-color: #0f4482;
  background: linear-gradient(#28a2ff, #0c87f5 45%, #035ad6);
}

.card.gone {
  border-color: #ececec;
  background: #f0f0f0;
}

.deck-actions {
  display: flex;
  flex-direction: column;
  align-items: flex-end;
  gap: 10px;
  width: 220px;
  margin-top: 10px;
}

.deck-actions .green-button {
  flex: none;
  width: 180px;
}

.locked {
  display: flex;
  align-items: center;
  gap: 5px;
}

.locked .green-button {
  margin-left: 5px;
}

/* stats */
.stats-head {
  display: flex;
  align-items: center;
  gap: 10px;
  height: 48px;
  padding-right: 20px;
}

.cross {
  margin-bottom: 4px;
}

.refresh {
  margin-left: auto;
}

table {
  width: 100%;
  border-collapse: collapse;
}

td,
th {
  height: 36px;
  padding: 0;
  font-weight: 400;
  text-align: left;
}

tbody + tbody::before {
  content: '';
  display: block;
  height: 18px;
}

.filter-cell {
  width: 27px;
}

.filter-cell button {
  display: block;
  padding-top: 2px;
}

th {
  width: 196px;
  white-space: nowrap;
}

.bar-line {
  display: flex;
  gap: 5px;
  font-size: 26px;
}

.bar {
  height: 36px;
  border: 2px solid;
  padding-left: 3px;
  color: #fff;
  line-height: 32px;
  box-shadow: inset -2px 2px 0 rgba(255, 255, 255, 0.3);
}

.bar.blue {
  border-color: #2262b0 #1c4f94 #163c78;
  background: linear-gradient(#2f96f8, #0768ee);
}

.bar.green {
  border-color: #2b7020 #1b5c12 #165010;
  background: linear-gradient(#49b425, #1e8a0b);
}

.bar.purple {
  border-color: #8b1f92 #5b1f6c #4d2160;
  background: linear-gradient(#d400d0, #b800b8);
}

.bar.none {
  border-width: 0 0 0 1px;
  padding: 0;
}

.summary {
  margin: 77px 20px 76px 0;
  padding: 19px 0 18px;
  border: solid #b2b2b2;
  border-width: 2px 0;
}

.hint {
  color: #b4b4b4;
}

.filter-button {
  position: relative;
  display: flex;
  align-items: center;
  width: 128px;
  height: 68px;
  padding-left: 7px;
  border: 2px solid #777;
  border-radius: 6px;
  background: linear-gradient(#dedede, #bcbcbc);
}

.filter-button b {
  align-self: flex-end;
  width: 18px;
  margin-bottom: 4px;
  color: #fffbd0;
  font-size: 32px;
  font-weight: 900;
  text-shadow: 0 0 2px #333, 0 0 2px #333, 0 0 2px #333;
}

.filter-button span {
  align-self: flex-end;
  margin-bottom: 4px;
  margin-left: -9px;
  font-size: 23px;
}

.filter-button i {
  position: absolute;
  top: 5px;
  right: 6px;
  width: 24px;
  height: 24px;
  border: 3px solid #ddd;
  border-radius: 50%;
  background: radial-gradient(circle at 40% 35%, #ff6a55, #e21a08);
  box-shadow: 0 0 0 1px #aaa;
}

/* dead cards */
.dead h2 {
  padding-left: 30px;
}

.note {
  width: 252px;
  margin-top: 11px;
  padding: 26px 0;
  border: 2px solid #959595;
  border-radius: 8px;
  text-align: center;
}

.dead .deck-actions {
  width: 216px;
}
</style>
